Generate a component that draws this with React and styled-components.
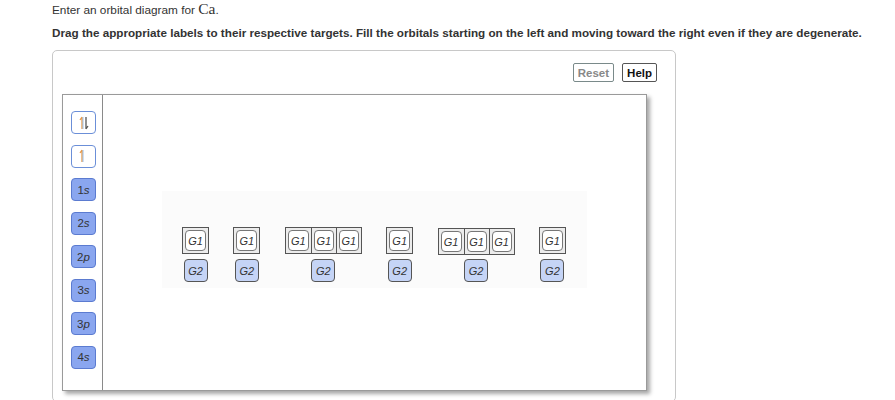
import React from 'react';
import styled, { createGlobalStyle } from 'styled-components';

const GlobalStyle = createGlobalStyle`
	body {
		margin: 0;
		background: #fff;
		font-family: "Liberation Sans", Arial, sans-serif;
		color: #222;
	}
`;

const Page = styled.div`
	padding: 0 0 0 52px;
	width: 895px;
	height: 400px;
	overflow: hidden;
	box-sizing: border-box;
`;

const Intro = styled.p`
	margin: 0;
	font-size: 11.8px;
	line-height: 17px;
	color: #333;
	white-space: nowrap;
`;

const Element = styled.span`
	font-family: "Liberation Serif", "Times New Roman", serif;
	font-size: 15.5px;
`;

const Instructions = styled.p`
	margin: 5px 0 0;
	font-size: 11.7px;
	font-weight: bold;
	line-height: 17px;
	color: #333;
	white-space: nowrap;
`;

const Panel = styled.div`
	margin-top: 9px;
	width: 624px;
	height: 352px;
	box-sizing: border-box;
	border: 1px solid #c8c8c8;
	border-radius: 5px;
	padding: 12px 28px 10px 9px;
	display: flex;
	flex-direction: column;
`;

const Toolbar = styled.div`
	display: flex;
	justify-content: flex-end;
	gap: 8px;
	margin-right: -10px;
	height: 19px;
`;

const ToolButton = styled.button`
	font-family: "Liberation Sans", Arial, sans-serif;
	font-size: 11.5px;
	font-weight: bold;
	padding: 0 4px;
	height: 19px;
	background: #fff;
	border: 1px solid ${p => (p.muted ? '#7a8a8a' : '#555')};
	color: ${p => (p.muted ? '#888' : '#111')};
	border-radius: 2px;
`;

const Canvas = styled.div`
	margin-top: 12px;
	flex: 1;
	display: flex;
	border: 1px solid #9a9a9a;
	background: #fff;
	box-shadow: 3px 3px 4px rgba(0, 0, 0, 0.35);
`;

const LabelColumn = styled.div`
	width: 40px;
	border-right: 1px solid #8a8a8a;
	display: flex;
	flex-direction: column;
	align-items: center;
	padding-top: 16px;
	gap: 10.5px;
	padding-left: 2px;
	box-sizing: border-box;
`;

const Label = styled.div`
	width: 25px;
	height: 23px;
	box-sizing: border-box;
	border-radius: 4px;
	border: 1px solid ${p => (p.arrow ? '#6b8fd8' : '#5b7bd0')};
	background: ${p => (p.arrow ? '#fff' : '#8aa6ef')};
	display: flex;
	align-items: center;
	justify-content: center;
	font-size: 11.5px;
	color: #333;
`;

const Sub = styled.i`
	font-family: "Liberation Sans", Arial, sans-serif;
`;

const Board = styled.div`
	flex: 1;
	display: flex;
	align-items: center;
	justify-content: center;
	padding-bottom: 6px;
`;

const TargetArea = styled.div`
	width: 425px;
	height: 97px;
	background: #fbfbfb;
	display: flex;
	align-items: flex-end;
	justify-content: space-between;
	padding: 0 21px 6px 20px;
	box-sizing: border-box;
`;

const Group = styled.div`
	display: flex;
	flex-direction: column;
	align-items: center;
	gap: 5px;
`;

const Cells = styled.div`
	display: flex;
	border: 1px solid #555;
	background: #ececec;
`;

const Cell = styled.div`
	width: 25px;
	height: 25px;
	box-sizing: border-box;
	padding: 2px;
	border-left: ${p => (p.first ? 'none' : '1px solid #555')};
`;

const Slot = styled.div`
	width: 100%;
	height: 100%;
	box-sizing: border-box;
	border: 1px solid #777;
	border-radius: 4px;
	background: #fff;
	display: flex;
	align-items: center;
	justify-content: center;
	font-size: 11px;
	font-style: italic;
	color: #333;
`;

const Tag = styled.div`
	width: 24px;
	height: 23px;
	box-sizing: border-box;
	border: 1px solid #555;
	border-radius: 4px;
	background: #c5d4f6;
	display: flex;
	align-items: center;
	justify-content: center;
	font-size: 11px;
	font-style: italic;
	color: #333;
	margin-top: ${p => (p.raised ? '-1px' : '0')};
`;

const Arrows = ({ pair }) => (
	<svg width="14" height="14" viewBox="0 0 14 14">
		<path d="M5 13 V1 M5 1 L3 4" stroke="#e89a4a" strokeWidth="1.3" fill="none" />
		<path d="M6 13 V1" stroke="#7fb0e8" strokeWidth="0.8" fill="none" />
		{pair && <path d="M9 1 V13 M9 13 L11 10" stroke="#555" strokeWidth="1.3" fill="none" />}
	</svg>
);

const orbitals = [
	{ n: '1', l: 's' },
	{ n: '2', l: 's' },
	{ n: '2', l: 'p' },
	{ n: '3', l: 's' },
	{ n: '3', l: 'p' },
	{ n: '4', l: 's' },
];

const groups = [1, 1, 3, 1, 3, 1];

const App = () => (
	<Page>
		<GlobalStyle />
		<Intro>Enter an orbital diagram for <Element>Ca</Element>.</Intro>
		<Instructions>
			Drag the appropriate labels to their respective targets. Fill the orbitals starting on the left and moving toward the right even if they are degenerate.
		</Instructions>
		<Panel>
			<Toolbar>
				<ToolButton muted>Reset</ToolButton>
				<ToolButton>Help</ToolButton>
			</Toolbar>
			<Canvas>
				<LabelColumn>
					<Label arrow><Arrows pair /></Label>
					<Label arrow><Arrows /></Label>
					{orbitals.map((o, i) => (
						<Label key={i}>{o.n}<Sub>{o.l}</Sub></Label>
					))}
				</LabelColumn>
				<Board>
					<TargetArea>
						{groups.map((count, i) => (
							<Group key={i}>
								<Cells>
									{Array.from({ length: count }).map((_, j) => (
										<Cell key={j} first={j === 0}>
											<Slot>G1</Slot>
										</Cell>
									))}
								</Cells>
								<Tag raised={i === 4}>G2</Tag>
							</Group>
						))}
					</TargetArea>
				</Board>
			</Canvas>
		</Panel>
	</Page>
);

export default App;
